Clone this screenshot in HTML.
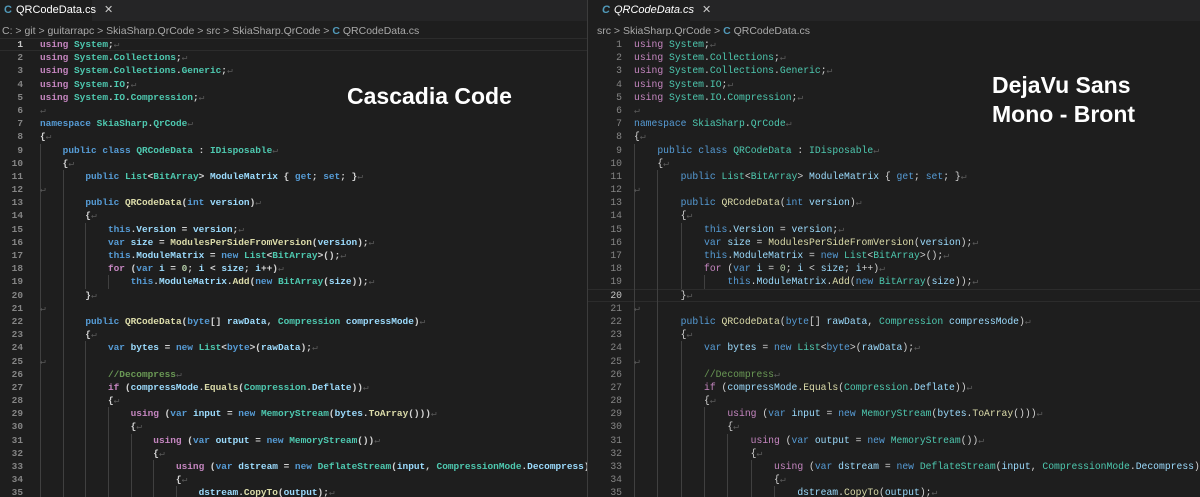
<!DOCTYPE html>
<html><head><meta charset="utf-8">
<style>
*{margin:0;padding:0;box-sizing:border-box}
body{width:1200px;height:497px;background:#1e1e1e;overflow:hidden;position:relative;font-family:"Liberation Sans",sans-serif}
.pane{position:absolute;top:0;height:497px;background:#1e1e1e;overflow:hidden}
#L{left:0;width:587px}
#R{left:588px;width:612px}
#div{position:absolute;left:587px;top:0;width:1px;height:497px;background:#3c3c3c}
.tabbar{position:absolute;left:0;top:0;right:0;height:21px;background:#252526}
.tab{position:absolute;top:0;height:21px;background:#1e1e1e;color:#fff;font-size:11px;line-height:21px;padding-left:4px;white-space:nowrap}
.tab .ic{color:#519aba;font-weight:bold;margin-right:4px}
.tab .x{margin-left:8px;color:#ccc}
.crumb{position:absolute;top:23px;height:16px;font-size:10.5px;color:#a9a9a9;line-height:16px;white-space:nowrap}
.crumb .ic{color:#519aba;font-weight:bold}
.code{position:absolute;top:38px;left:0;right:0}
.ln{position:relative;height:13.2px;line-height:13.2px;white-space:pre;font-family:"Liberation Mono",monospace}
.num{position:absolute;text-align:right;color:#858585}
.ln.cur .num{color:#c6c6c6}
.ln.cur{box-shadow:inset 0 1px #2c2c2c,inset 0 -1px #2c2c2c}
.txt{position:absolute;color:#d4d4d4}
.g{position:absolute;top:0;width:1px;height:13.2px;background:#404040}
#L .ln{font-size:9.45px;font-weight:bold}
#L .num{left:0;width:23px}
#L .txt{left:40px}
#R .ln{font-size:9.72px}
#R .num{left:0;width:34px}
#R .txt{left:46px}
.k{color:#569cd6}.p{color:#c586c0}.t{color:#4ec9b0}.f{color:#dcdcaa}.v{color:#9cdcfe}.c{color:#6a9955}.n{color:#b5cea8}.w{color:#5a5a5a;font-weight:normal}
.over{position:absolute;color:#fff;font-weight:bold;font-size:23px;line-height:29px;font-family:"Liberation Sans",sans-serif}
</style></head><body>
<div class="pane" id="L">
 <div class="tabbar"><div class="tab" style="left:0;width:92px"><span class="ic">C</span>QRCodeData.cs<span class="x">✕</span></div></div>
 <div class="crumb" style="left:2px">C: &gt; git &gt; guitarrapc &gt; SkiaSharp.QrCode &gt; src &gt; SkiaSharp.QrCode &gt; <span class="ic">C</span> QRCodeData.cs</div>
 <div class="code" id="codeL"></div>
</div>
<div id="div"></div>
<div class="pane" id="R">
 <div class="tabbar"><div class="tab" style="left:0;width:102px;padding-left:14px;font-style:italic"><span class="ic">C</span>QRCodeData.cs<span class="x" style="font-style:normal">✕</span></div></div>
 <div class="crumb" style="left:9px">src &gt; SkiaSharp.QrCode &gt; <span class="ic">C</span> QRCodeData.cs</div>
 <div class="code" id="codeR"></div>
</div>
<div class="over" style="left:347px;top:82px">Cascadia Code</div>
<div class="over" style="left:992px;top:71px">DejaVu Sans<br>Mono - Bront</div>
<script>
var lines=[
[0,'<span class="p">using</span> <span class="t">System</span>;'],
[0,'<span class="p">using</span> <span class="t">System</span>.<span class="t">Collections</span>;'],
[0,'<span class="p">using</span> <span class="t">System</span>.<span class="t">Collections</span>.<span class="t">Generic</span>;'],
[0,'<span class="p">using</span> <span class="t">System</span>.<span class="t">IO</span>;'],
[0,'<span class="p">using</span> <span class="t">System</span>.<span class="t">IO</span>.<span class="t">Compression</span>;'],
[0,'',0],
[0,'<span class="k">namespace</span> <span class="t">SkiaSharp</span>.<span class="t">QrCode</span>'],
[0,'{'],
[1,'<span class="k">public</span> <span class="k">class</span> <span class="t">QRCodeData</span> : <span class="t">IDisposable</span>'],
[1,'{'],
[2,'<span class="k">public</span> <span class="t">List</span>&lt;<span class="t">BitArray</span>&gt; <span class="v">ModuleMatrix</span> { <span class="k">get</span>; <span class="k">set</span>; }'],
[0,'',2],
[2,'<span class="k">public</span> <span class="f">QRCodeData</span>(<span class="k">int</span> <span class="v">version</span>)'],
[2,'{'],
[3,'<span class="k">this</span>.<span class="v">Version</span> = <span class="v">version</span>;'],
[3,'<span class="k">var</span> <span class="v">size</span> = <span class="f">ModulesPerSideFromVersion</span>(<span class="v">version</span>);'],
[3,'<span class="k">this</span>.<span class="v">ModuleMatrix</span> = <span class="k">new</span> <span class="t">List</span>&lt;<span class="t">BitArray</span>&gt;();'],
[3,'<span class="p">for</span> (<span class="k">var</span> <span class="v">i</span> = <span class="n">0</span>; <span class="v">i</span> &lt; <span class="v">size</span>; <span class="v">i</span>++)'],
[4,'<span class="k">this</span>.<span class="v">ModuleMatrix</span>.<span class="f">Add</span>(<span class="k">new</span> <span class="t">BitArray</span>(<span class="v">size</span>));'],
[2,'}'],
[0,'',2],
[2,'<span class="k">public</span> <span class="f">QRCodeData</span>(<span class="k">byte</span>[] <span class="v">rawData</span>, <span class="t">Compression</span> <span class="v">compressMode</span>)'],
[2,'{'],
[3,'<span class="k">var</span> <span class="v">bytes</span> = <span class="k">new</span> <span class="t">List</span>&lt;<span class="k">byte</span>&gt;(<span class="v">rawData</span>);'],
[0,'',3],
[3,'<span class="c">//Decompress</span>'],
[3,'<span class="p">if</span> (<span class="v">compressMode</span>.<span class="f">Equals</span>(<span class="t">Compression</span>.<span class="v">Deflate</span>))'],
[3,'{'],
[4,'<span class="p">using</span> (<span class="k">var</span> <span class="v">input</span> = <span class="k">new</span> <span class="t">MemoryStream</span>(<span class="v">bytes</span>.<span class="f">ToArray</span>()))'],
[4,'{'],
[5,'<span class="p">using</span> (<span class="k">var</span> <span class="v">output</span> = <span class="k">new</span> <span class="t">MemoryStream</span>())'],
[5,'{'],
[6,'<span class="p">using</span> (<span class="k">var</span> <span class="v">dstream</span> = <span class="k">new</span> <span class="t">DeflateStream</span>(<span class="v">input</span>, <span class="t">CompressionMode</span>.<span class="v">Decompress</span>)) ',-1],
[6,'{'],
[7,'<span class="v">dstream</span>.<span class="f">CopyTo</span>(<span class="v">output</span>);']
];
function build(id,cw,left,cur){
 var h='';
 lines.forEach(function(l,i){
  var ind=l[0],noArrow=l[2]===-1;
  var guides=(l[1]===''&&l[2]!==undefined)?l[2]:ind;
  var s='<div class="ln'+(i+1===cur?' cur':'')+'"><span class="num">'+(i+1)+'</span>';
  for(var g=0;g<guides;g++)s+='<span class="g" style="left:'+Math.round(left+g*4*cw)+'px"></span>';
  if(l[1]===''){
   s+='<span class="txt"><span class="w">↵</span></span>';
  } else {
   s+='<span class="txt">'+'    '.repeat(ind)+l[1]+(noArrow?'':'<span class="w">↵</span>')+'</span>';
  }
  h+=s+'</div>';
 });
 document.getElementById(id).innerHTML=h;
}
build('codeL',5.67,40,1);
build('codeR',5.83,46,20);
</script>
</body></html>
